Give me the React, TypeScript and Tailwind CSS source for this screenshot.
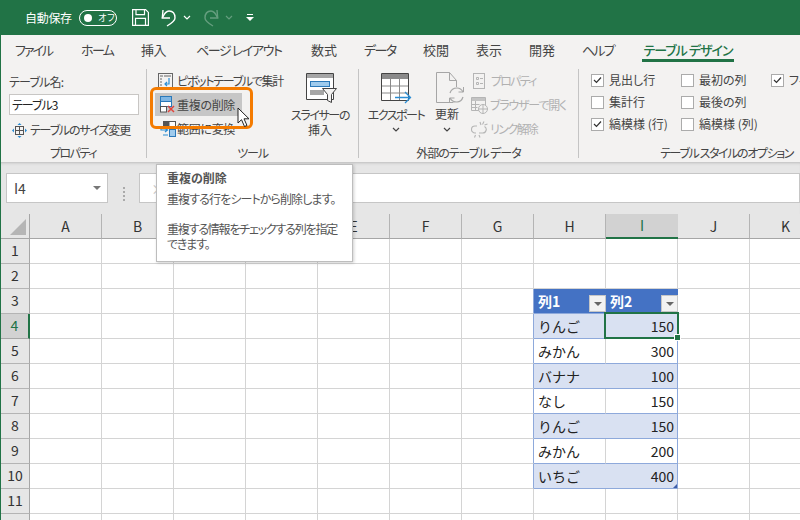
const jp = "font-['Noto_Sans_CJK_JP','Liberation_Sans',sans-serif]";

// widths are label + gap, the tabs are not evenly spaced in the ribbon
const tabs = [
  { label: "ファイル", w: "w-[66px]", t: "tracking-[-2px]" },
  { label: "ホーム", w: "w-[60px]", t: "tracking-[-1.6px]" },
  { label: "挿入", w: "w-[55px]", t: "tracking-[-0.5px]" },
  { label: "ページ レイアウト", w: "w-[115px]", t: "tracking-[-1.4px]" },
  { label: "数式", w: "w-[53px]", t: "tracking-normal" },
  { label: "データ", w: "w-[59px]", t: "tracking-[-1.6px]" },
  { label: "校閲", w: "w-[53px]", t: "tracking-normal" },
  { label: "表示", w: "w-[53px]", t: "tracking-normal" },
  { label: "開発", w: "w-[53px]", t: "tracking-normal" },
  { label: "ヘルプ", w: "w-[60px]", t: "tracking-[-1.8px]" },
];

const columns = ["A", "B", "C", "D", "E", "F", "G", "H", "I", "J", "K"];
const rowNumbers = [1, 2, 3, 4, 5, 6, 7, 8, 9, 10, 11];

const tableRows: Record<number, [string, string]> = {
  4: ["りんご", "150"],
  5: ["みかん", "300"],
  6: ["バナナ", "100"],
  7: ["なし", "150"],
  8: ["りんご", "150"],
  9: ["みかん", "200"],
  10: ["いちご", "400"],
};

function Chevron({ className = "" }: { className?: string }) {
  return (
    <svg width="8" height="5" viewBox="0 0 8 5" className={className} fill="none" stroke="currentColor" strokeWidth="1.2">
      <path d="M1 1l3 3 3-3" />
    </svg>
  );
}

function TitleBar() {
  return (
    <div className="h-[35px] bg-[#217346] flex items-center text-white shrink-0">
      <span className="ml-[25px] w-[48px] text-[12px] whitespace-nowrap tracking-[-0.3px]">自動保存</span>
      <div className="ml-[6px] w-[38px] h-[16px] rounded-full border border-white flex items-center">
        <span className="ml-[4px] w-[8px] h-[8px] rounded-full bg-white" />
        <span className="ml-[6px] text-[9px] leading-none whitespace-nowrap tracking-[-0.5px]">オフ</span>
      </div>
      <svg width="17" height="17" viewBox="0 0 17 17" className="ml-[15px]" fill="none" stroke="white" strokeWidth="1.2">
        <path d="M.6.6h13l2.800 2.800v13H.6z" />
        <path d="M4 .6v5h8.500v-5M3.500 16.400v-7h10v7" />
      </svg>
      <svg width="16" height="18" viewBox="0 0 16 18" className="ml-[12px]" fill="none" stroke="white" strokeWidth="1.4">
        <path d="M2 1L1.300 9H9" />
        <path d="M1.300 9C3 5 5 2 8 2c4 0 6 3 6 7 0 3-3 5-8 8" />
      </svg>
      <Chevron className="ml-[6px]" />
      <svg width="16" height="18" viewBox="0 0 16 18" className="ml-[12px] opacity-30" fill="none" stroke="white" strokeWidth="1.4">
        <path d="M14 1l.700 8H7" />
        <path d="M14.700 9C13 5 11 2 8 2 4 2 2 5 2 9c0 3 3 5 8 8" />
      </svg>
      <Chevron className="ml-[6px] opacity-30" />
      <svg width="8" height="7" viewBox="0 0 8 7" className="ml-[13px]" fill="white">
        <path d="M1 0h6v1H1zM0 3h8L4 7z" />
      </svg>
    </div>
  );
}

function TabRow() {
  return (
    <div className="h-[30px] pl-[15px] flex text-[13px] text-[#444] [font-feature-settings:'palt']">
      {tabs.map((t) => (
        <div key={t.label} className={`${t.w} ${t.t} h-full pt-[5px] shrink-0 whitespace-nowrap`}>
          {t.label}
        </div>
      ))}
      <div className="w-[92px] h-[27px] pt-[5px] shrink-0 flex justify-center whitespace-nowrap tracking-[-1px] text-[#217346] font-medium border-b-[3px] border-[#217346]">
        テーブル デザイン
      </div>
    </div>
  );
}

function Group({ width, label, labelClass = "justify-center", children }: { width: string; label: string; labelClass?: string; children: React.ReactNode }) {
  return (
    <div className={`${width} h-[97px] pt-[4px] flex flex-col shrink-0 relative`}>
      <div className="h-[76px] flex">{children}</div>
      <div className={`h-[16px] flex items-center whitespace-nowrap text-[12px] ${labelClass}`}>{label}</div>
    </div>
  );
}

function Divider() {
  return <div className="w-px h-[89px] mt-[4px] bg-[#c4c4c4] shrink-0" />;
}

function PivotIcon() {
  return (
    <svg width="15" height="16" viewBox="0 0 15 16" fill="none" className="shrink-0">
      <rect x="0.500" y="0.500" width="14" height="15" stroke="#666" />
      <path d="M2 3h3M2 6h2M2 9h2M2 12h2M6 3h7" stroke="#666" />
      <path d="M11 5v6H7M9 9l-2 2 2 2" stroke="#2a8dd4" strokeWidth="1.200" />
    </svg>
  );
}

function DedupeIcon() {
  return (
    <svg width="16" height="17" viewBox="0 0 16 17" fill="none" className="shrink-0">
      <rect x="0.500" y="0.500" width="11" height="5" fill="#7fb6e4" stroke="#2b79b9" />
      <rect x="0.500" y="5.500" width="11" height="5" fill="#fff" stroke="#2b79b9" />
      <rect x="0.500" y="10.500" width="6" height="5.500" fill="#fff" stroke="#555" />
      <path d="M8 10l6 6M14 10l-6 6" stroke="#e2453c" strokeWidth="1.500" />
    </svg>
  );
}

function ConvertIcon() {
  return (
    <svg width="16" height="16" viewBox="0 0 16 16" fill="none" className="shrink-0">
      <rect x="3.500" y="0.500" width="12" height="6" fill="#fff" stroke="#555" />
      <rect x="3.500" y="0.500" width="6" height="6" fill="#555" />
      <rect x="9.500" y="8.500" width="6" height="7" fill="#9fcbed" stroke="#2b79b9" />
      <path d="M1 5v4h7M5 7l2.500 2L5 11M8 14H3" stroke="#2a8dd4" strokeWidth="1.200" />
    </svg>
  );
}

function SlicerIcon() {
  return (
    <svg width="31" height="30" viewBox="0 0 31 30" fill="none">
      <path d="M.500.500h27v26H.500z" fill="#fff" stroke="#444" />
      <rect x="1" y="1" width="26" height="4" fill="#a6a6a6" />
      <rect x="4.500" y="8.500" width="19" height="5" fill="#9fcbed" stroke="#2b79b9" />
      <rect x="4" y="17" width="14" height="5" fill="#a6a6a6" />
      <path d="M16.500 15.500h14l-5 6v8l-4-2v-6z" fill="#f3f2f1" stroke="#444" />
    </svg>
  );
}

function ExportIcon() {
  return (
    <svg width="31" height="34" viewBox="0 0 31 34" fill="none">
      <path d="M.500.500h27v27H.500z" fill="#fff" stroke="#444" />
      <rect x="1" y="1" width="26" height="5" fill="#8a8a8a" />
      <path d="M1 13h26M1 20h26M9.500 6v21M18.500 6v21" stroke="#8a8a8a" />
      <path d="M14 24.500h15M24 19l5.500 5.500L24 30" stroke="#2a8dd4" strokeWidth="1.300" fill="none" />
    </svg>
  );
}

function RefreshIcon() {
  return (
    <svg width="29" height="32" viewBox="0 0 29 32" fill="none">
      <path d="M.500.500h13l7 8v22H.500z" fill="#f3f2f1" stroke="#a6a6a6" />
      <path d="M13.500.500v8h7" stroke="#a6a6a6" />
      <circle cx="20.500" cy="23" r="8" fill="#f3f2f1" />
      <path d="M14 21c1-3 3-5 7-5 3 0 5 2 6 4M27 25c-1 3-3 5-6 5-4 0-6-2-7-4" stroke="#a6a6a6" strokeWidth="1.200" />
      <path d="M27.500 15v5h-5M13.500 31v-5h5" stroke="#a6a6a6" />
    </svg>
  );
}

function PropsIcon() {
  return (
    <svg width="13" height="16" viewBox="0 0 13 16" fill="none" stroke="#b5b5b5" className="shrink-0">
      <rect x="0.500" y="0.500" width="11" height="15" />
      <path d="M3.500 4.500h2v2h-2zM7 5.500h3M3.500 9.500h2v2h-2zM7 10.500h3" />
    </svg>
  );
}

function BrowserIcon() {
  return (
    <svg width="17" height="17" viewBox="0 0 17 17" fill="none" stroke="#b5b5b5" className="shrink-0">
      <path d="M.500.500h14v13H.500z" />
      <rect x="1" y="1" width="13" height="3" fill="#c4c4c4" stroke="none" />
      <path d="M.500 7.500h8M.500 10.500h6M4.500 4v10" />
      <circle cx="12" cy="12" r="4.500" fill="#f3f2f1" />
      <path d="M7.500 12h9M12 7.500v9" />
    </svg>
  );
}

function UnlinkIcon() {
  return (
    <svg width="17" height="17" viewBox="0 0 17 17" fill="none" stroke="#b5b5b5" strokeWidth="1.100" className="shrink-0">
      <path d="M6 5H4a3.500 3.500 0 0 0 0 7h1M8 12h3.500a3.500 3.500 0 0 0 2-6.500" />
      <path d="M4.500 14l-1 2.500M8 14l1 2.500M9 1l1 3M13 0.500l-1.500 3M16.500 3l-3 1" />
    </svg>
  );
}

function ResizeIcon() {
  return (
    <svg width="15" height="15" viewBox="0 0 15 15" fill="none" className="shrink-0">
      <rect x="3.500" y="3.500" width="8" height="8" stroke="#555" />
      <path d="M3.500 7.500h8M7.500 3.500v8" stroke="#555" />
      <path d="M7.500 0l-2 2h4zM7.500 15l-2-2h4zM0 7.500l2-2v4zM15 7.500l-2-2v4z" fill="#2a8dd4" />
    </svg>
  );
}

function Checkbox({ checked, label }: { checked?: boolean; label: string }) {
  return (
    <div className="flex items-center gap-[5px] whitespace-nowrap">
      <span className="w-[13px] h-[13px] bg-white border border-[#ababab] flex items-center justify-center shrink-0">
        {checked && (
          <svg width="9" height="8" viewBox="0 0 9 8" fill="none" stroke="#333" strokeWidth="1.200">
            <path d="M1 4l2.500 2.500L8 1.500" />
          </svg>
        )}
      </span>
      <span>{label}</span>
    </div>
  );
}

function Ribbon() {
  return (
    <div className="h-[97px] flex text-[12px] text-[#444] [font-feature-settings:'palt']">
      <Group width="w-[146px]" label="プロパティ" labelClass="justify-center tracking-[-1.5px]">
        <div className="pl-[9px] flex flex-col">
          <div className="h-[25px] pt-[4px] leading-[18px] tracking-[-0.8px]">テーブル名:</div>
          <div className="w-[130px] h-[21px] bg-white border border-[#c8c6c4] pl-[2px] leading-[19px] text-[#222] tracking-[-1px]">テーブル3</div>
          <div className="mt-[3px] h-[24px] pl-[3px] flex items-center gap-[3px] whitespace-nowrap tracking-[-1.2px]">
            <ResizeIcon />
            <span>テーブルのサイズ変更</span>
          </div>
        </div>
      </Group>
      <Divider />
      <Group width="w-[211px]" label="ツール" labelClass="justify-center tracking-[-1.2px]">
        <div className="w-[141px] pl-[8px] flex flex-col shrink-0">
          <div className="h-[24px] pl-[3px] flex items-center gap-[4px] whitespace-nowrap tracking-[-1.3px]">
            <PivotIcon />
            <span>ピボットテーブルで集計</span>
          </div>
          <div className="w-[87px] h-[23px] pl-[5px] flex items-center gap-[1px] whitespace-nowrap bg-[#c6c6c6] tracking-[-0.3px]">
            <DedupeIcon />
            <span>重複の削除</span>
          </div>
          <div className="h-[26px] pl-[5px] flex items-center gap-[1px] whitespace-nowrap tracking-[-0.3px]">
            <ConvertIcon />
            <span>範囲に変換</span>
          </div>
        </div>
        <div className="flex-1 pr-[6px] flex flex-col items-center text-center leading-[15px] whitespace-nowrap">
          <div className="mt-[4px] ml-[3px]">
            <SlicerIcon />
          </div>
          <div className="mt-[4px] tracking-[-1.4px]">スライサーの</div>
          <div>挿入</div>
        </div>
      </Group>
      <Divider />
      <Group width="w-[219px]" label="外部のテーブル データ" labelClass="justify-center tracking-[-1px]">
        <div className="w-[70px] pl-[4px] flex flex-col items-center shrink-0">
          <div className="mt-[4px] h-[33px]">
            <ExportIcon />
          </div>
          <div className="mt-[1px] whitespace-nowrap leading-[15px] tracking-[-1.5px]">エクスポート</div>
          <Chevron className="mt-[5px]" />
        </div>
        <div className="w-[36px] flex flex-col items-center shrink-0">
          <div className="mt-[3px] ml-[6px] h-[32px]">
            <RefreshIcon />
          </div>
          <div className="mt-[2px] leading-[15px]">更新</div>
          <Chevron className="mt-[6px]" />
        </div>
        <div className="ml-[6px] flex flex-col text-[#b1b1b1] tracking-[-1.2px]">
          <div className="h-[24px] pl-[2px] flex items-center gap-[5px] whitespace-nowrap">
            <PropsIcon />
            <span className="tracking-[-1.8px]">プロパティ</span>
          </div>
          <div className="h-[24px] flex items-center gap-[2px] whitespace-nowrap">
            <BrowserIcon />
            <span>ブラウザーで開く</span>
          </div>
          <div className="h-[24px] flex items-center gap-[2px] whitespace-nowrap">
            <UnlinkIcon />
            <span className="tracking-[-1.6px]">リンク解除</span>
          </div>
        </div>
      </Group>
      <Divider />
      <Group width="w-[221px]" label="テーブル スタイルのオプション" labelClass="justify-end pr-[7px] tracking-[-1.4px]">
        <div className="pl-[12px] grid grid-cols-[90px_90px_90px] auto-rows-[22px] pt-0">
          <Checkbox checked label="見出し行" />
          <Checkbox label="最初の列" />
          <Checkbox checked label="フィルター ボタン" />
          <Checkbox label="集計行" />
          <Checkbox label="最後の列" />
          <div />
          <Checkbox checked label="縞模様 (行)" />
          <Checkbox label="縞模様 (列)" />
        </div>
      </Group>
    </div>
  );
}

function FormulaBar() {
  return (
    <div className="h-[52px] bg-[#e6e6e6] pt-[11px] flex shrink-0 shadow-[inset_0_3px_3px_-2px_#bbb]">
      <div className="ml-[5px] w-[102px] h-[30px] bg-white border border-[#c6c6c6] pl-[7px] flex items-center justify-between pr-[6px] text-[14px] text-[#444]">
        <span>I4</span>
        <span className="w-0 h-0 border-x-[4px] border-x-transparent border-t-[4px] border-t-[#777]" />
      </div>
      <div className="w-[31px] flex flex-col items-center justify-center gap-[2px]">
        <span className="w-[2px] h-[2px] bg-[#aaa]" />
        <span className="w-[2px] h-[2px] bg-[#aaa]" />
        <span className="w-[2px] h-[2px] bg-[#aaa]" />
        <span className="w-[2px] h-[2px] bg-[#aaa]" />
      </div>
      <div className="flex-1 h-[30px] bg-white border border-[#c6c6c6] pl-[11px] flex items-center text-[14px] text-[#c6c6c6]">×</div>
    </div>
  );
}

function cellClass(row: number, col: string) {
  const band = row % 2 === 0;
  if (row === 3 && (col === "H" || col === "I")) {
    return "bg-[#4472c4] text-white font-bold border-b border-[#8ea9db]";
  }
  if (row > 3 && row < 11 && col === "H") {
    return band ? "bg-[#d9e1f2] border-b border-[#8ea9db]" : "bg-white border-b border-b-[#8ea9db] border-r border-r-[#d4d4d4]";
  }
  if (row > 3 && row < 11 && col === "I") {
    return band ? "bg-[#d9e1f2] border-b border-b-[#8ea9db] border-r border-r-[#8ea9db]" : "bg-white border-b border-b-[#8ea9db] border-r border-r-[#8ea9db]";
  }
  if (row >= 3 && row < 11 && col === "G") {
    return "bg-white border-b border-b-[#d4d4d4] border-r border-r-[#8ea9db]";
  }
  return "bg-white border-b border-r border-[#d4d4d4]";
}

function FilterButton() {
  return (
    <span className="absolute right-0 top-[6px] w-[17px] h-[17px] bg-[#f2f2f2] border border-[#c6c6c6] flex items-center justify-center">
      <span className="w-0 h-0 border-x-[4px] border-x-transparent border-t-[4px] border-t-[#666]" />
    </span>
  );
}

function Sheet() {
  return (
    <div className="flex-1 overflow-hidden bg-white text-[14px] text-[#222]">
      <div className="flex h-[25px]">
        <div className="w-[29px] h-[25px] shrink-0 bg-[#e6e6e6] border-r border-b border-[#a6a6a6] relative">
          <span className="absolute right-[3px] bottom-[3px] w-0 h-0 border-l-[16px] border-l-transparent border-b-[16px] border-b-[#b5b5b5]" />
        </div>
        {columns.map((c) =>
          c === "I" ? (
            <div key={c} className="w-[72px] h-[25px] shrink-0 bg-[#d2d2d2] border-b-2 border-[#217346] flex items-center justify-center text-[#217346] text-[14px]">
              {c}
            </div>
          ) : (
            <div key={c} className="w-[72px] h-[25px] shrink-0 bg-[#e6e6e6] border-r border-r-[#b4b4b4] border-b border-b-[#a6a6a6] flex items-center justify-center text-[#333] text-[14px]">
              {c}
            </div>
          ),
        )}
      </div>
      {rowNumbers.map((r) => (
        <div key={r} className="flex h-[25px]">
          {r === 4 ? (
            <div className="w-[29px] h-[25px] pb-[1px] shrink-0 bg-[#d2d2d2] border-r-2 border-[#217346] border-b border-b-[#a6a6a6] flex items-center justify-center text-[#217346]">
              {r}
            </div>
          ) : (
            <div className="w-[29px] h-[25px] pb-[1px] shrink-0 bg-[#e6e6e6] border-r border-r-[#a6a6a6] border-b border-b-[#b4b4b4] flex items-center justify-center text-[#333]">
              {r}
            </div>
          )}
          {columns.map((c) => {
            const data = tableRows[r];
            return (
              <div key={c} className={`w-[72px] h-[25px] pb-[1px] shrink-0 relative flex items-center leading-none whitespace-nowrap ${cellClass(r, c)}`}>
                {r === 3 && c === "H" && <span className="pl-[4px]">列1</span>}
                {r === 3 && c === "I" && <span className="pl-[4px]">列2</span>}
                {r === 3 && (c === "H" || c === "I") && <FilterButton />}
                {data && c === "H" && <span className="pl-[4px]">{data[0]}</span>}
                {data && c === "I" && <span className="ml-auto pr-[3px]">{data[1]}</span>}
                {r === 4 && c === "I" && (
                  <>
                    <span className="absolute z-10 -left-[2px] -top-[2px] w-[75px] h-[27px] border-2 border-[#217346]" />
                    <span className="absolute z-10 -right-[4px] -bottom-[3px] w-[5px] h-[5px] bg-[#217346] border border-white box-content" />
                  </>
                )}
                {r === 10 && c === "I" && (
                  <span className="absolute right-0 bottom-0 w-0 h-0 border-l-[4px] border-l-transparent border-b-[4px] border-b-[#3f5fa8]" />
                )}
              </div>
            );
          })}
        </div>
      ))}
      <div className="flex h-[25px]">
        <div className="w-[29px] h-[25px] shrink-0 bg-[#e6e6e6] border-r border-r-[#a6a6a6]" />
        {columns.map((c) => (
          <div key={c} className="w-[72px] h-[25px] shrink-0 border-r border-[#d4d4d4]" />
        ))}
      </div>
    </div>
  );
}

function Cursor() {
  return (
    <svg width="14" height="21" viewBox="0 0 14 21" className="absolute z-30 left-[237px] top-[107px]">
      <path d="M1 1v15l3.500-3.300L7.500 19.500l2.500-1-3-6.700H12z" fill="#fff" stroke="#222" strokeWidth="1" />
    </svg>
  );
}

export default function App() {
  return (
    <div className={`relative w-[800px] h-[520px] overflow-hidden bg-[#f3f2f1] flex flex-col ${jp}`}>
      <TitleBar />
      <div className="flex-1 flex flex-col border-l border-[#217346] min-h-0">
        <div className="-ml-px shrink-0">
          <TabRow />
          <Ribbon />
        </div>
        <FormulaBar />
        <Sheet />
      </div>

      <div className="absolute z-20 left-[150px] top-[87px] w-[103px] h-[42px] rounded-[6px] border-[3px] border-[#f47b00]" />
      <Cursor />

      <div className="absolute z-20 left-[156px] top-[164px] w-[197px] h-[98px] bg-white border border-[#bdbdbd] shadow-[1px_1px_3px_#00000030] pl-[10px] pt-[4px] text-[12px] text-[#555] [font-feature-settings:'palt'] tracking-[-0.9px] whitespace-nowrap">
        <div className="font-bold leading-[18px] tracking-normal">重複の削除</div>
        <div className="mt-[3px] leading-[18px]">重複する行をシートから削除します。</div>
        <div className="mt-[13px] leading-[15px] tracking-[-1.2px]">重複する情報をチェックする列を指定<br />できます。</div>
      </div>
    </div>
  );
}
